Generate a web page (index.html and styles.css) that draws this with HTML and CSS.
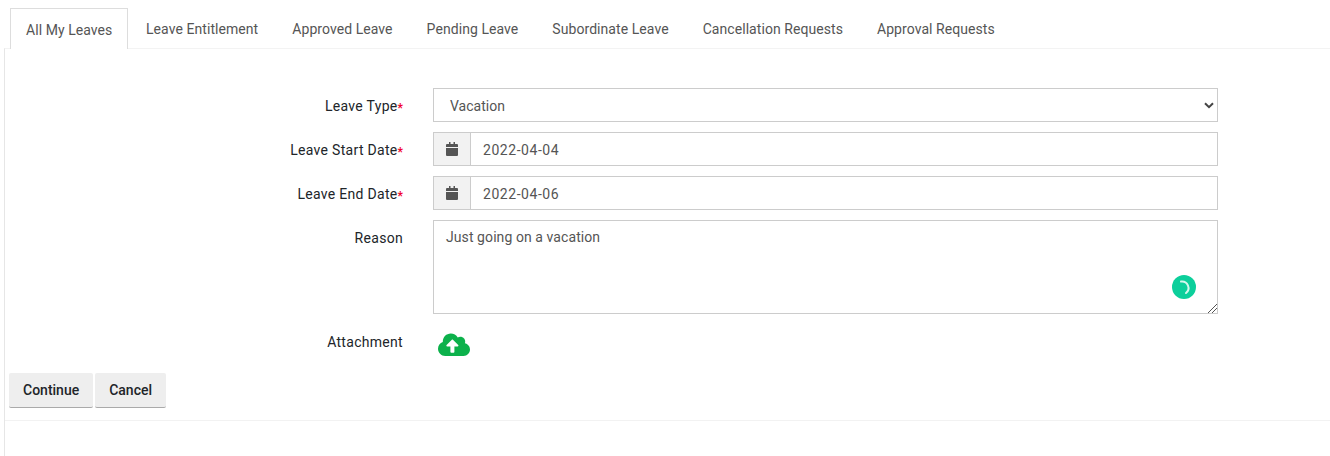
FILE: index.html
```html
<!DOCTYPE html>
<html lang="en">
<head>
<meta charset="utf-8">
<title>Leave</title>
<link rel="stylesheet" href="styles.css">
</head>
<body>
<ul class="tabs">
  <li class="tab active">All My Leaves</li>
  <li class="tab">Leave Entitlement</li>
  <li class="tab">Approved Leave</li>
  <li class="tab">Pending Leave</li>
  <li class="tab">Subordinate Leave</li>
  <li class="tab">Cancellation Requests</li>
  <li class="tab">Approval Requests</li>
</ul>
<main class="panel">
  <form class="form">
    <div class="row">
      <label class="label">Leave Type<span class="req">*</span></label>
      <div class="field">
        <div class="select">
          <span>Vacation</span>
          <svg class="chevron" viewBox="0 0 10 7" width="10" height="7"><path d="M1 1.200 5 5.200 9 1.200" fill="none" stroke="#444" stroke-width="2"/></svg>
        </div>
      </div>
    </div>
    <div class="row">
      <label class="label">Leave Start Date<span class="req">*</span></label>
      <div class="field group">
        <span class="addon"><svg width="12" height="14" viewBox="0 0 12 14"><path d="M3 0h1.500v2h3V0H9v2h2a1 1 0 0 1 1 1v2H0V3a1 1 0 0 1 1-1h2zM0 6h12v7a1 1 0 0 1-1 1H1a1 1 0 0 1-1-1z" fill="#555"/></svg></span>
        <span class="date">2022-04-04</span>
      </div>
    </div>
    <div class="row">
      <label class="label">Leave End Date<span class="req">*</span></label>
      <div class="field group">
        <span class="addon"><svg width="12" height="14" viewBox="0 0 12 14"><path d="M3 0h1.500v2h3V0H9v2h2a1 1 0 0 1 1 1v2H0V3a1 1 0 0 1 1-1h2zM0 6h12v7a1 1 0 0 1-1 1H1a1 1 0 0 1-1-1z" fill="#555"/></svg></span>
        <span class="date">2022-04-06</span>
      </div>
    </div>
    <div class="row">
      <label class="label">Reason</label>
      <div class="field area">
        <span>Just going on a vacation</span>
        <span class="spinner"><svg width="24" height="24" viewBox="0 0 24 24"><circle cx="12" cy="12" r="12" fill="#0ccf9b"/><path d="M9 6.500A6.500 6.500 0 0 1 14 18" fill="none" stroke="#d4f7ec" stroke-width="2" stroke-linecap="round"/></svg></span>
        <svg class="grip" width="9" height="9" viewBox="0 0 9 9"><path d="M0 9 9 0M4 9 9 4" stroke="#555" stroke-width="1"/></svg>
      </div>
    </div>
    <div class="row attach">
      <label class="label">Attachment</label>
      <div class="upload">
        <svg width="32" height="25.600" viewBox="0 0 640 512"><path fill="#0cb14b" d="M537.6 226.6c4.1-10.7 6.4-22.4 6.400-34.600 0-53-43-96-96-96-19.700 0-38.100 6-53.300 16.200C367 64.200 315.300 32 256 32c-88.400 0-160 71.600-160 160 0 2.700.1 5.400.2 8.100C40.200 219.800 0 273.200 0 336c0 79.500 64.500 144 144 144h368c70.700 0 128-57.300 128-128 0-61.900-44-113.600-102.400-125.400zM393.400 288H328v112c0 8.800-7.200 16-16 16h-48c-8.800 0-16-7.200-16-16V288h-65.400c-14.300 0-21.400-17.200-11.300-27.300l105.400-105.400c6.200-6.200 16.400-6.200 22.600 0l105.400 105.400c10.100 10.100 2.900 27.300-11.300 27.300z"/></svg>
      </div>
    </div>
    <div class="actions">
      <button type="button" class="btn btn-continue">Continue</button>
      <button type="button" class="btn btn-cancel">Cancel</button>
    </div>
  </form>
  <hr class="rule">
</main>
</body>
</html>
```

FILE: styles.css
```css
* { box-sizing: border-box; }
html, body { margin: 0; height: 100%; }
body {
  font-family: Roboto, "Liberation Sans", sans-serif;
  font-size: 14px;
  color: #212529;
  background: #fff;
  overflow: hidden;
}
.tabs {
  display: flex;
  list-style: none;
  margin: 0;
  padding: 8px 0 0 10px;
  height: 49px;
}
.tab {
  height: 41px;
  padding: 11px 17px 0;
  line-height: 20px;
  letter-spacing: 0.065px;
  color: #555;
  white-space: nowrap;
}
.tab.active {
  width: 118px;
  padding: 11px 0 0 15px;
  margin-right: 1px;
  border: 1px solid #ddd;
  border-bottom: 0;
  background: #fff;
  position: relative;
  z-index: 1;
}
.panel {
  margin-top: -1px;
  margin-left: 4px;
  height: 408px;
  border-left: 1px solid #e6e6e6;
  border-top: 1px solid #f3f3f3;
}
.form { padding: 39px 0 0; }
.row {
  display: flex;
  margin-bottom: 10px;
}
.label {
  width: 398px;
  text-align: right;
  line-height: 20px;
  padding-top: 8px;
  letter-spacing: 0.3px;
  color: #212529;
  flex: none;
}
.req {
  color: #f0002e;
  font-size: 12px;
  font-weight: 700;
  letter-spacing: 0;
  vertical-align: -1px;
}
.field {
  width: 785px;
  margin-left: 30px;
  height: 34px;
  border: 1px solid #ccc;
  color: #555;
}
.select {
  display: flex;
  align-items: center;
  justify-content: space-between;
  height: 100%;
  padding: 2px 3px 0 16px;
}
.chevron { display: block; margin-top: -2px; }
.group { display: flex; }
.addon {
  width: 37px;
  flex: none;
  display: flex;
  align-items: center;
  justify-content: center;
  background: #f2f2f2;
  border-right: 1px solid #ccc;
}
.date {
  padding: 1px 0 0 12px;
  line-height: 32px;
  letter-spacing: 0.55px;
}
.area {
  height: 94px;
  padding: 6px 12px;
  line-height: 20px;
  letter-spacing: 0.08px;
  position: relative;
}
.spinner {
  position: absolute;
  left: 738px;
  top: 54px;
  width: 24px;
  height: 24px;
}
.spinner svg, .grip { display: block; }
.grip {
  position: absolute;
  right: 0;
  bottom: 0;
}
.attach { margin-bottom: 0; height: 49px; }
.upload {
  margin-left: 35px;
  padding-top: 8px;
}
.upload svg { display: block; }
.actions {
  display: flex;
  gap: 2px;
  padding-left: 4px;
}
.btn {
  height: 35px;
  padding: 0 14px;
  border: 0;
  border-bottom: 1px solid #aaa;
  border-radius: 2px;
  background: #eee;
  font: 500 14px Roboto, "Liberation Sans", sans-serif;
  color: #212529;
}
.rule {
  margin: 12px 0 0;
  border: 0;
  border-top: 1px solid #f2f2f2;
}
```
